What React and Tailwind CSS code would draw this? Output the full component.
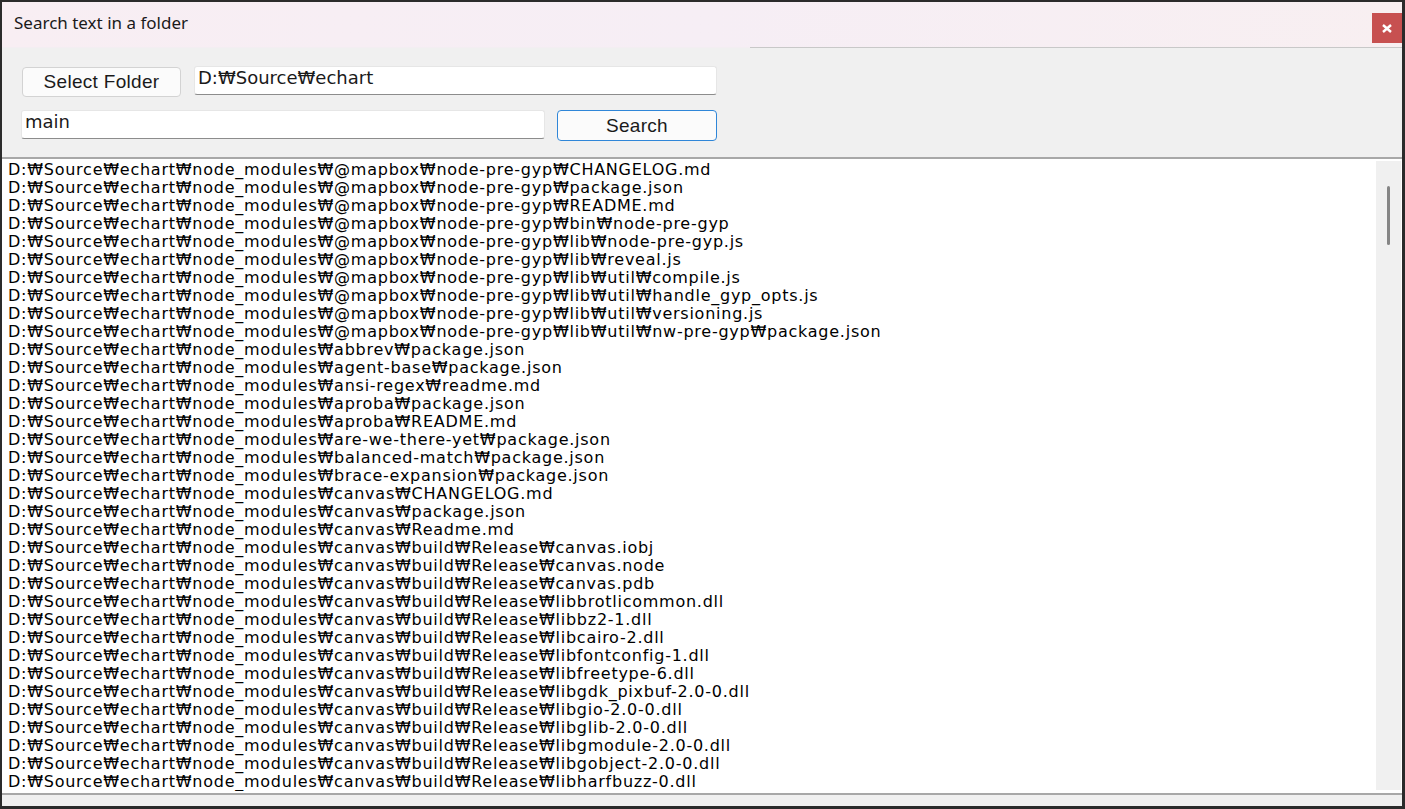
import React from "react";

const base = "D:₩Source₩echart₩node_modules₩";

const files = [
  "@mapbox₩node-pre-gyp₩CHANGELOG.md",
  "@mapbox₩node-pre-gyp₩package.json",
  "@mapbox₩node-pre-gyp₩README.md",
  "@mapbox₩node-pre-gyp₩bin₩node-pre-gyp",
  "@mapbox₩node-pre-gyp₩lib₩node-pre-gyp.js",
  "@mapbox₩node-pre-gyp₩lib₩reveal.js",
  "@mapbox₩node-pre-gyp₩lib₩util₩compile.js",
  "@mapbox₩node-pre-gyp₩lib₩util₩handle_gyp_opts.js",
  "@mapbox₩node-pre-gyp₩lib₩util₩versioning.js",
  "@mapbox₩node-pre-gyp₩lib₩util₩nw-pre-gyp₩package.json",
  "abbrev₩package.json",
  "agent-base₩package.json",
  "ansi-regex₩readme.md",
  "aproba₩package.json",
  "aproba₩README.md",
  "are-we-there-yet₩package.json",
  "balanced-match₩package.json",
  "brace-expansion₩package.json",
  "canvas₩CHANGELOG.md",
  "canvas₩package.json",
  "canvas₩Readme.md",
  "canvas₩build₩Release₩canvas.iobj",
  "canvas₩build₩Release₩canvas.node",
  "canvas₩build₩Release₩canvas.pdb",
  "canvas₩build₩Release₩libbrotlicommon.dll",
  "canvas₩build₩Release₩libbz2-1.dll",
  "canvas₩build₩Release₩libcairo-2.dll",
  "canvas₩build₩Release₩libfontconfig-1.dll",
  "canvas₩build₩Release₩libfreetype-6.dll",
  "canvas₩build₩Release₩libgdk_pixbuf-2.0-0.dll",
  "canvas₩build₩Release₩libgio-2.0-0.dll",
  "canvas₩build₩Release₩libglib-2.0-0.dll",
  "canvas₩build₩Release₩libgmodule-2.0-0.dll",
  "canvas₩build₩Release₩libgobject-2.0-0.dll",
  "canvas₩build₩Release₩libharfbuzz-0.dll",
];

export default function App() {
  return (
    <div className="w-[1405px] h-[809px] bg-[#2b2b2b] pt-[2px] pl-[2px] pr-[3px] pb-[3px] overflow-hidden">
      <div className="flex flex-col h-full bg-[#f0f0f0]">
        {/* title bar */}
        <div className="h-[45px] flex items-start justify-between bg-gradient-to-r from-[#f8eef3] via-[#f6eef5] to-[#f8eff1]">
          <span className="pl-[12px] pt-[9px] leading-[24px] text-[17px] text-[#1a1a1a] font-['Noto_Sans',sans-serif]">
            Search text in a folder
          </span>
          <button className="mt-[11px] w-[30px] h-[30px] bg-[#c75050] flex items-center justify-center">
            <svg width="10" height="9" viewBox="0 0 10 9">
              <path d="M1 1 L9 8 M9 1 L1 8" stroke="#fff" strokeWidth="2.4" />
            </svg>
          </button>
        </div>
        <div className="flex h-px">
          <div className="w-[748px] bg-[#f3eef2]" />
          <div className="flex-1 bg-[#c8c8c8]" />
        </div>

        {/* controls */}
        <div className="h-[109px] pt-[18px] flex flex-col gap-[13px] font-['Liberation_Sans',sans-serif] text-[#1a1a1a]">
          <div className="flex items-start pl-[20px] gap-[13px]">
            <button className="mt-[1px] w-[159px] h-[30px] rounded-[4px] bg-[#fbfbfb] border border-[#d3d3d3] text-[19px] leading-[28px] tracking-[0.3px]">
              Select Folder
            </button>
            <div className="w-[523px] h-[29px] bg-white border border-[#e6e6e6] border-b-[#8c8c8c] rounded-[3px] pl-[3px] text-[18px] leading-[22px] font-['DejaVu_Sans',sans-serif]">
              D:₩Source₩echart
            </div>
          </div>
          <div className="flex items-start pl-[19px] gap-[12px]">
            <div className="w-[524px] h-[29px] bg-white border border-[#e6e6e6] border-b-[#8c8c8c] rounded-[3px] pl-[3px] text-[18px] leading-[22px] font-['DejaVu_Sans',sans-serif]">
              main
            </div>
            <button className="w-[160px] h-[31px] rounded-[4px] bg-[#fbfbfb] border-[1.5px] border-[#2f86d8] text-[19px] leading-[28px] tracking-[0.3px]">
              Search
            </button>
          </div>
        </div>

        {/* result list */}
        <div className="flex-1 flex flex-col">
          <div className="h-[638px] bg-white border-t-2 border-b-2 border-[#a8a8a8] flex pt-[2px] pb-[2px]">
            <div className="flex-1 overflow-hidden pl-[6px] font-['DejaVu_Sans',sans-serif] text-[16px] tracking-[0.75px] text-black">
              {files.map((f, i) => (
                <div key={i} className="h-[18px] leading-[18px] whitespace-nowrap">
                  {base + f}
                </div>
              ))}
            </div>
            <div className="w-[25px] mr-[1px] mb-[1px] bg-[#f0f0f0] pt-[25px] flex justify-center">
              <div className="w-[3px] h-[59px] rounded-full bg-[#858585]" />
            </div>
          </div>
        </div>
      </div>
    </div>
  );
}
